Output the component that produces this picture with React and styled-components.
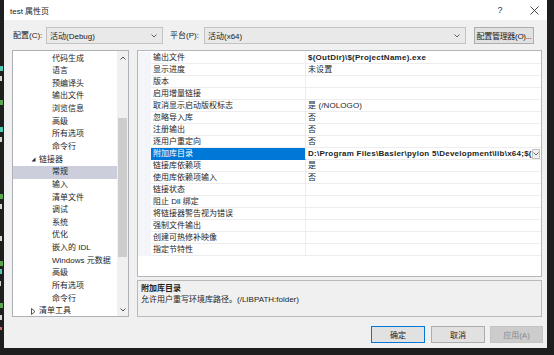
import React from "react";
import styled, { createGlobalStyle } from "styled-components";

const GlobalStyle = createGlobalStyle`
  html, body {
    margin: 0;
    padding: 0;
    background: #1e1e1e;
  }
  body {
    font-family: "Liberation Sans", "Noto Sans CJK SC", sans-serif;
    font-size: 8px;
    color: #1a1a1a;
  }
`;

const Page = styled.div`
  display: flex;
  width: 554px;
  height: 355px;
  overflow: hidden;
  background: #1e1e1e;
`;

// sliver of the code editor behind the dialog
const CodeStrip = styled.div`
  width: 4px;
  flex: none;
  display: flex;
  flex-direction: column;
  padding-top: 66px;
`;

const CodeMark = styled.div`
  height: ${(p) => p.$h}px;
  margin-top: ${(p) => p.$gap}px;
  width: ${(p) => p.$w}px;
  background: ${(p) => p.$c};
`;

const Dialog = styled.div`
  width: 543px;
  height: 348px;
  flex: none;
  background: #f0f0f0;
  display: flex;
  flex-direction: column;
`;

const TitleBar = styled.div`
  height: 20px;
  background: #ffffff;
  display: flex;
  align-items: center;
  padding-left: 6px;
`;

const Title = styled.div`
  flex: 1;
  color: #222;
`;

const TitleButton = styled.div`
  width: ${(p) => p.$w}px;
  display: flex;
  justify-content: center;
  color: #333;
  font-size: 9px;
`;

const Toolbar = styled.div`
  height: 30px;
  display: flex;
  align-items: flex-start;
  padding: 7px 0 0 9px;
  box-sizing: border-box;
`;

const Label = styled.div`
  width: ${(p) => p.$w}px;
  height: 17px;
  line-height: 17px;
  color: #222;
  white-space: nowrap;
`;

const Combo = styled.div`
  width: ${(p) => p.$w}px;
  height: 17px;
  box-sizing: border-box;
  border: 1px solid #c3c3c3;
  background: #e9e9e9;
  display: flex;
  align-items: center;
  padding: 0 5px 0 3px;
  margin-right: ${(p) => p.$mr}px;
  color: #222;
`;

const ComboText = styled.span`
  flex: 1;
`;

const PushButton = styled.div`
  width: ${(p) => p.$w}px;
  height: 17px;
  flex: none;
  box-sizing: border-box;
  border: 1px solid ${(p) => (p.$default ? "#0078d7" : p.$disabled ? "#c4c4c4" : "#adadad")};
  background: ${(p) => (p.$disabled ? "#cccccc" : "#e1e1e1")};
  color: ${(p) => (p.$disabled ? "#8a8a8a" : "#222")};
  display: flex;
  align-items: center;
  justify-content: center;
  white-space: nowrap;
  letter-spacing: ${(p) => (p.$tight ? "-0.3px" : "0")};
  margin-right: ${(p) => p.$mr || 0}px;
`;

const Main = styled.div`
  display: flex;
  padding-left: 8px;
  gap: 8px;
  height: 267px;
`;

const Tree = styled.div`
  width: 117px;
  box-sizing: border-box;
  border: 1px solid #adb0b6;
  background: #fff;
  display: flex;
`;

const TreeList = styled.div`
  flex: 1;
  overflow: hidden;
  padding-top: 1.5px;
`;

const TreeRow = styled.div`
  height: 12.65px;
  line-height: 12.65px;
  display: flex;
  align-items: center;
  white-space: nowrap;
  padding-left: ${(p) => (p.$level === 1 ? 18 : 39)}px;
  background: ${(p) => (p.$selected ? "#cccedb" : "transparent")};
  color: #1e1e1e;
`;

const Arrow = styled.span`
  width: 8px;
  height: 12px;
  display: flex;
  align-items: center;
`;

const Scrollbar = styled.div`
  width: 11px;
  background: #f0f0f0;
  display: flex;
  flex-direction: column;
  align-items: center;
`;

const ScrollArrow = styled.div`
  height: 13px;
  display: flex;
  align-items: center;
  justify-content: center;
`;

const ScrollTrack = styled.div`
  flex: 1;
  width: 100%;
`;

const Thumb = styled.div`
  margin: 54px auto 0;
  width: 9px;
  height: 139px;
  background: #cdcdcd;
`;

const RightCol = styled.div`
  width: 405px;
  display: flex;
  flex-direction: column;
  gap: 3px;
`;

const Grid = styled.div`
  height: 227px;
  box-sizing: border-box;
  border: 1px solid #b4b6bb;
  background: #fff;
  padding-top: 1px;
`;

const PropRow = styled.div`
  display: flex;
  height: 12px;
`;

const Gutter = styled.div`
  width: 13px;
  background: #f4f5f8;
`;

const NameCell = styled.div`
  width: 155px;
  box-sizing: border-box;
  border-right: 1px solid #ececec;
  border-bottom: 1px solid ${(p) => (p.$selected ? "#0078d7" : "#ededed")};
  padding-left: 2px;
  line-height: 11px;
  white-space: nowrap;
  background: ${(p) => (p.$selected ? "#0078d7" : "#fff")};
  color: ${(p) => (p.$selected ? "#fff" : "#1e1e1e")};
`;

const ValueCell = styled.div`
  flex: 1;
  min-width: 0;
  display: flex;
  align-items: center;
  border-bottom: 1px solid #ededed;
  padding-left: 2px;
  line-height: 11px;
  color: #1e1e1e;
`;

const ValueText = styled.span`
  flex: 1;
  white-space: nowrap;
  font-weight: ${(p) => (p.$bold ? 700 : 400)};
  letter-spacing: ${(p) => (p.$bold ? "0.25px" : "0.1px")};
`;

const DropButton = styled.div`
  width: 9px;
  height: 10px;
  box-sizing: border-box;
  border: 1px solid #c0c0c0;
  background: #f0f0f0;
  display: flex;
  align-items: center;
  justify-content: center;
  margin-right: 1px;
`;

const Description = styled.div`
  height: 37px;
  box-sizing: border-box;
  border: 1px solid #b9b9b9;
  padding: 2px 3px;
  line-height: 11px;
  color: #1e1e1e;
`;

const DescTitle = styled.div`
  font-weight: 700;
`;

const Footer = styled.div`
  display: flex;
  justify-content: flex-end;
  padding: 9px 4px 0 0;
`;

function Chevron({ up, color = "#606060" }) {
  return (
    <svg width="6" height="4" viewBox="0 0 6 4">
      <path
        d={up ? "M0.5 3.5 L3 1 L5.5 3.5" : "M0.5 0.5 L3 3 L5.5 0.5"}
        fill="none"
        stroke={color}
        strokeWidth="1"
      />
    </svg>
  );
}

function Expander({ open }) {
  return open ? (
    <svg width="5" height="5" viewBox="0 0 5 5">
      <path d="M4.5 0.5 L4.5 4.5 L0.5 4.5 Z" fill="#262626" />
    </svg>
  ) : (
    <svg width="5" height="7" viewBox="0 0 5 7">
      <path d="M0.5 0.5 L4 3.5 L0.5 6.5 Z" fill="none" stroke="#555" strokeWidth="1" />
    </svg>
  );
}

// [gap above, height, width, colour]
const codeMarks = [
  [0, 5, 3, "#4ec9b0"],
  [5, 5, 2, "#d4d4d4"],
  [19, 5, 3, "#57a64a"],
  [22, 5, 3, "#4ec9b0"],
  [5, 5, 2, "#d4d4d4"],
  [52, 5, 3, "#57a64a"],
  [5, 5, 2, "#d4d4d4"],
  [27, 5, 2, "#d4d4d4"],
  [20, 5, 3, "#57a64a"],
  [3, 5, 2, "#4ec9b0"],
  [7, 5, 1, "#d4d4d4"],
  [17, 5, 3, "#57a64a"],
  [7, 5, 2, "#d4d4d4"],
  [7, 3, 2, "#d16969"],
];

const treeItems = [
  { label: "代码生成", level: 2 },
  { label: "语言", level: 2 },
  { label: "预编译头", level: 2 },
  { label: "输出文件", level: 2 },
  { label: "浏览信息", level: 2 },
  { label: "高级", level: 2 },
  { label: "所有选项", level: 2 },
  { label: "命令行", level: 2 },
  { label: "链接器", level: 1, open: true },
  { label: "常规", level: 2, selected: true },
  { label: "输入", level: 2 },
  { label: "清单文件", level: 2 },
  { label: "调试", level: 2 },
  { label: "系统", level: 2 },
  { label: "优化", level: 2 },
  { label: "嵌入的 IDL", level: 2 },
  { label: "Windows 元数据", level: 2 },
  { label: "高级", level: 2 },
  { label: "所有选项", level: 2 },
  { label: "命令行", level: 2 },
  { label: "清单工具", level: 1, open: false },
];

const properties = [
  { name: "输出文件", value: "$(OutDir)\\$(ProjectName).exe", bold: true },
  { name: "显示进度", value: "未设置" },
  { name: "版本", value: "" },
  { name: "启用增量链接", value: "" },
  { name: "取消显示启动版权标志", value: "是 (/NOLOGO)" },
  { name: "忽略导入库", value: "否" },
  { name: "注册输出", value: "否" },
  { name: "逐用户重定向", value: "否" },
  {
    name: "附加库目录",
    value: "D:\\Program Files\\Basler\\pylon 5\\Development\\lib\\x64;$(",
    bold: true,
    selected: true,
  },
  { name: "链接库依赖项", value: "是" },
  { name: "使用库依赖项输入", value: "否" },
  { name: "链接状态", value: "" },
  { name: "阻止 Dll 绑定", value: "" },
  { name: "将链接器警告视为错误", value: "" },
  { name: "强制文件输出", value: "" },
  { name: "创建可热修补映像", value: "" },
  { name: "指定节特性", value: "" },
];

export default function App() {
  return (
    <>
      <GlobalStyle />
      <Page>
        <CodeStrip>
          {codeMarks.map(([gap, h, w, c], i) => (
            <CodeMark key={i} $gap={gap} $h={h} $w={w} $c={c} />
          ))}
        </CodeStrip>
        <Dialog>
          <TitleBar>
            <Title>test 属性页</Title>
            <TitleButton $w={14}>?</TitleButton>
            <TitleButton $w={14} />
            <TitleButton $w={26}>
              <svg width="9" height="9" viewBox="0 0 9 9">
                <path d="M0.5 0.5 L8.5 8.5 M8.5 0.5 L0.5 8.5" stroke="#333" strokeWidth="0.9" />
              </svg>
            </TitleButton>
          </TitleBar>

          <Toolbar>
            <Label $w={33}>配置(C):</Label>
            <Combo $w={117} $mr={7}>
              <ComboText>活动(Debug)</ComboText>
              <Chevron />
            </Combo>
            <Label $w={34}>平台(P):</Label>
            <Combo $w={262} $mr={8}>
              <ComboText>活动(x64)</ComboText>
              <Chevron />
            </Combo>
            <PushButton $w={60} $tight>
              配置管理器(O)...
            </PushButton>
          </Toolbar>

          <Main>
            <Tree>
              <TreeList>
                {treeItems.map((item, i) => (
                  <TreeRow key={i} $level={item.level} $selected={item.selected}>
                    {item.level === 1 && (
                      <Arrow>
                        <Expander open={item.open} />
                      </Arrow>
                    )}
                    {item.label}
                  </TreeRow>
                ))}
              </TreeList>
              <Scrollbar>
                <ScrollArrow>
                  <Chevron up color="#505050" />
                </ScrollArrow>
                <ScrollTrack>
                  <Thumb />
                </ScrollTrack>
                <ScrollArrow>
                  <Chevron color="#505050" />
                </ScrollArrow>
              </Scrollbar>
            </Tree>

            <RightCol>
              <Grid>
                {properties.map((p, i) => (
                  <PropRow key={i}>
                    <Gutter />
                    <NameCell $selected={p.selected}>{p.name}</NameCell>
                    <ValueCell>
                      <ValueText $bold={p.bold}>{p.value}</ValueText>
                      {p.selected && (
                        <DropButton>
                          <Chevron />
                        </DropButton>
                      )}
                    </ValueCell>
                  </PropRow>
                ))}
              </Grid>
              <Description>
                <DescTitle>附加库目录</DescTitle>
                <div>允许用户重写环境库路径。(/LIBPATH:folder)</div>
              </Description>
            </RightCol>
          </Main>

          <Footer>
            <PushButton $w={54} $mr={6} $default>
              确定
            </PushButton>
            <PushButton $w={54} $mr={5}>
              取消
            </PushButton>
            <PushButton $w={53} $disabled>
              应用(A)
            </PushButton>
          </Footer>
        </Dialog>
      </Page>
    </>
  );
}
